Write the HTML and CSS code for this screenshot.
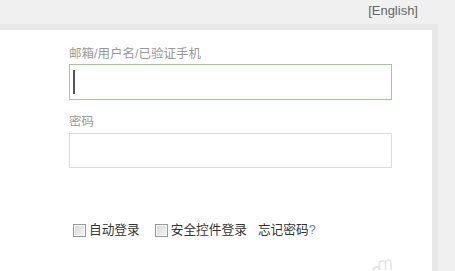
FILE: index.html
```html
<!DOCTYPE html>
<html lang="zh-CN">
<head>
<meta charset="utf-8">
<title>登录</title>
<link rel="stylesheet" href="styles.css">
</head>
<body>
<div class="top"><a class="lang" href="#">[English]</a></div>
<div class="card">
  <div class="form">
    <div class="label">邮箱/用户名/已验证手机</div>
    <div class="field focus"><span class="caret"></span></div>
    <div class="label label2">密码</div>
    <div class="field"></div>
    <div class="opts">
      <span class="chk"></span><span class="opt">自动登录</span>
      <span class="chk chk2"></span><span class="opt">安全控件登录</span>
      <a class="forgot" href="#">忘记密码<span class="q">?</span></a>
    </div>
    <div class="foot">
      <svg class="paw" width="20" height="12" viewBox="0 0 20 12">
        <path d="M1 11 Q2 8 5 8 Q8 8 8 11" fill="none" stroke="#e2e2e2" stroke-width="1.4"/>
        <path d="M7 11 V6 Q7 2 11 2 Q13 2 13.5 4 Q14 1 16.5 1 Q19 1 19 5 V11" fill="none" stroke="#e2e2e2" stroke-width="1.4"/>
        <path d="M13.5 4 V11" fill="none" stroke="#e2e2e2" stroke-width="1.4"/>
      </svg>
    </div>
  </div>
</div>
</body>
</html>
```

FILE: styles.css
```css
html, body {
  margin: 0;
  padding: 0;
  background: #f0f0f0;
  overflow: hidden;
  height: 271px;
}
body {
  font-family: "Liberation Sans", "Noto Sans CJK SC", sans-serif;
  font-size: 13px;
  color: #333;
}
.top {
  height: 24px;
  display: flex;
  justify-content: flex-end;
  padding-right: 37px;
  box-sizing: border-box;
}
.lang {
  margin-top: 3px;
  font-size: 13px;
  line-height: 16px;
  color: #666;
  text-decoration: none;
}
.card {
  margin-left: -10px;
  margin-right: 17px;
  border: 6px solid #e8e8e8;
  border-bottom: none;
  background: #fff;
  height: 247px;
  overflow: hidden;
}
.form {
  padding-left: 73px;
  padding-top: 16px;
  width: 323px;
}
.label {
  font-size: 12.5px;
  line-height: 16px;
  color: #999;
  height: 16px;
  margin-bottom: 2px;
}
.label2 {
  margin-top: 14px;
  margin-bottom: 3px;
}
.field {
  height: 35px;
  border: 1px solid #dcdcdc;
  box-sizing: border-box;
  display: flex;
  align-items: center;
  padding-left: 3px;
}
.focus {
  height: 36px;
  border-color: #9cd088;
}
.caret {
  width: 2px;
  height: 24px;
  background: #555;
}
.opts {
  margin-top: 55px;
  margin-left: 4px;
  display: flex;
  align-items: center;
  height: 14px;
  line-height: 14px;
  font-size: 12.7px;
}
.chk {
  width: 13px;
  height: 13px;
  box-sizing: border-box;
  border: 1px solid #9a9a9a;
  background: linear-gradient(135deg, #d8d8d8 0%, #f4f4f4 100%);
  box-shadow: inset 0 0 0 1px #f8f8f8;
  margin-right: 3px;
}
.chk2 {
  margin-left: 15px;
}
.opt {
  color: #333;
}
.forgot {
  margin-left: 11px;
  color: #333;
  text-decoration: none;
}
.q {
  color: #5b7fb0;
}
.foot {
  display: flex;
  justify-content: flex-end;
  margin-top: 22px;
}
.paw {
  display: block;
}
```
